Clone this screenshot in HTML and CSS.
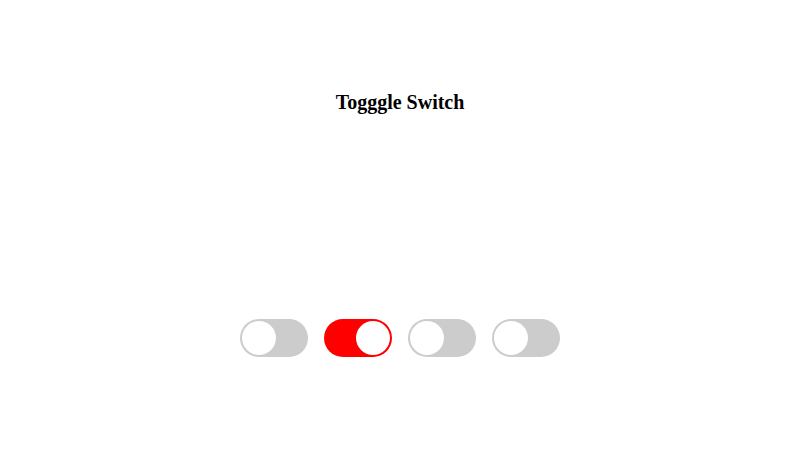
FILE: index.html
```html
<!DOCTYPE html>
<html lang="en">
<head>
  <meta charset="UTF-8">
  <meta name="viewport" content="width=device-width, initial-scale=1.0">
  <title>Togggle Switch</title>
  <link rel="stylesheet" href="styles.css">
</head>
<body>
  <h2 class="title">Togggle Switch</h2>

  <div class="switches">
    <label class="switch">
      <input type="checkbox">
      <span class="slider"></span>
    </label>
    <label class="switch">
      <input type="checkbox" checked>
      <span class="slider"></span>
    </label>
    <label class="switch">
      <input type="checkbox">
      <span class="slider"></span>
    </label>
    <label class="switch">
      <input type="checkbox">
      <span class="slider"></span>
    </label>
  </div>
</body>
</html>
```

FILE: styles.css
```css
body {
  margin: 0;
  font-family: 'Liberation Serif', 'Times New Roman', serif;
  background-color: #fff;
  color: #000;
}

.title {
  margin: 91px 0 0;
  font-size: 20px;
  line-height: 23px;
  text-align: center;
}

.switches {
  display: flex;
  justify-content: center;
  gap: 16px;
  margin-top: 205px;
}

.switch {
  position: relative;
  display: inline-block;
  width: 68px;
  height: 38px;
  cursor: pointer;
}

.switch input {
  display: none;
}

.slider {
  display: block;
  width: 100%;
  height: 100%;
  border-radius: 20px;
  background-color: #ccc;
  transition: background-color 0.3s;
}

/* knob */
.slider::before {
  content: "";
  position: absolute;
  top: 2px;
  left: 2px;
  width: 34px;
  height: 34px;
  border-radius: 50%;
  background-color: #fff;
  transition: transform 0.3s;
}

.switch input:checked + .slider {
  background-color: #f00;
}

.switch input:checked + .slider::before {
  transform: translateX(30px);
}
```
